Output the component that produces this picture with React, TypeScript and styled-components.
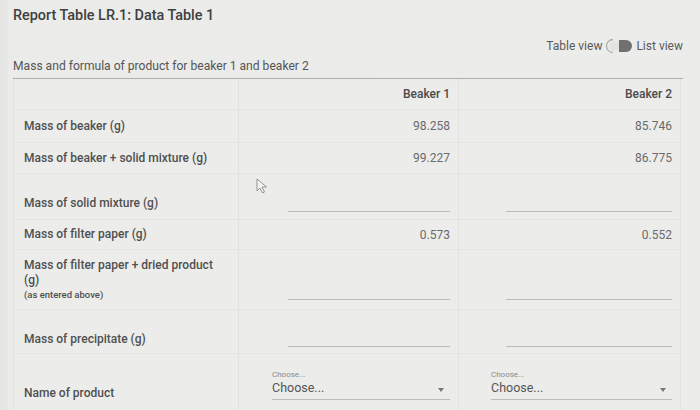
import React from "react";
import styled, { createGlobalStyle } from "styled-components";

const Global = createGlobalStyle`
  html, body { margin: 0; padding: 0; background: #eaeae8; }
  body { font-family: Roboto, "Liberation Sans", Arial, sans-serif; width: 700px; height: 410px; overflow: hidden; }
`;

const Page = styled.div`
  position: relative;
  width: 700px;
  height: 410px;
  box-sizing: border-box;
  padding: 6px 17px 0 13px;
  background: linear-gradient(90deg, #e6e6e4 0px, #e6e6e4 7px, #ebebe9 8px, #ececea 100%);
  overflow: hidden;
`;

const Title = styled.h1`
  margin: 0;
  font-size: 14.4px;
  font-weight: 500;
  color: #3f3f3f;
  line-height: 20px;
`;

const ToggleRow = styled.div`
  display: flex;
  justify-content: flex-end;
  align-items: center;
  gap: 2px;
  margin-top: 12px;
  font-size: 12px;
  color: #5a5a5a;
  height: 16px;
`;

const Switch = styled.span`
  display: inline-flex;
  width: 30px;
  height: 16px;
`;

const Subtitle = styled.div`
  font-size: 12.1px;
  color: #555;
  line-height: 16px;
  margin-top: 4px;
  padding-bottom: 4px;
  border-bottom: 1.5px solid #adadab;
`;

const Grid = styled.div`
  display: grid;
  grid-template-columns: 225px 220px 222px;
  border-left: 1px solid #e2e2e0;
`;

const Cell = styled.div<{ $h: number; $align?: "start" | "center" | "end"; $right?: boolean; $pb?: number; $pt?: number }>`
  height: ${(p) => p.$h}px;
  box-sizing: border-box;
  display: flex;
  flex-direction: column;
  justify-content: ${(p) => (p.$align === "start" ? "flex-start" : p.$align === "end" ? "flex-end" : "center")};
  align-items: ${(p) => (p.$right ? "flex-end" : "stretch")};
  padding: ${(p) => p.$pt ?? 0}px 8px ${(p) => p.$pb ?? 0}px 10px;
  border-right: 1px solid #e2e2e0;
  border-bottom: 1px solid #e3e3e1;
  background: #ececea;
`;

const Label = styled.div`
  font-size: 12px;
  font-weight: 500;
  color: #505050;
  line-height: 15px;
`;

const Note = styled.div`
  font-size: 9.5px;
  font-weight: 500;
  color: #505050;
  line-height: 13px;
`;

const Head = styled.div`
  font-size: 12px;
  font-weight: 500;
  color: #4a4a4a;
`;

const Value = styled.div`
  font-size: 12px;
  color: #6a6a6a;
`;

const Underline = styled.div<{ $left: number }>`
  margin-left: ${(p) => p.$left}px;
  border-bottom: 1px solid #bcbcba;
  height: 0;
`;

const Select = styled.div<{ $left: number }>`
  margin-left: ${(p) => p.$left - 10}px;
  border-bottom: 1px solid #bcbcba;
  position: relative;
  padding-bottom: 4px;
`;

const SelectHint = styled.div`
  font-size: 8px;
  color: #8a8a8a;
  line-height: 10px;
`;

const SelectValue = styled.div`
  font-size: 12.5px;
  color: #555;
  line-height: 15px;
`;

const Caret = styled.span`
  position: absolute;
  right: 6px;
  bottom: 7px;
  width: 0;
  height: 0;
  border-left: 3px solid transparent;
  border-right: 3px solid transparent;
  border-top: 4px solid #777;
`;

const Pointer = styled.svg`
  position: absolute;
  left: 256px;
  top: 178px;
`;

const rows = [
  { label: "Mass of beaker (g)", b1: "98.258", b2: "85.746", h: 33 },
  { label: "Mass of beaker + solid mixture (g)", b1: "99.227", b2: "86.775", h: 31 },
];

export default function App() {
  return (
    <Page>
      <Global />
      <Title>Report Table LR.1: Data Table 1</Title>
      <ToggleRow>
        <span>Table view</span>
        <Switch>
          <svg width="30" height="16" viewBox="0 0 30 16">
            <path d="M9 1.5 A6.5 6.5 0 0 0 9 14.5" fill="none" stroke="#b0b0ae" strokeWidth="1.3" />
            <rect x="5" y="3.5" width="22" height="9" rx="4.5" fill="#e4e4e2" />
            <circle cx="22" cy="8" r="6" fill="#707070" />
            <rect x="15" y="2" width="7" height="12" fill="#707070" />
          </svg>
        </Switch>
        <span>List view</span>
      </ToggleRow>
      <Subtitle>Mass and formula of product for beaker 1 and beaker 2</Subtitle>
      <Grid>
        <Cell $h={31} />
        <Cell $h={31} $right>
          <Head>Beaker 1</Head>
        </Cell>
        <Cell $h={31} $right>
          <Head>Beaker 2</Head>
        </Cell>

        {rows.map((r) => (
          <React.Fragment key={r.label}>
            <Cell $h={r.h}>
              <Label>{r.label}</Label>
            </Cell>
            <Cell $h={r.h} $right>
              <Value>{r.b1}</Value>
            </Cell>
            <Cell $h={r.h} $right>
              <Value>{r.b2}</Value>
            </Cell>
          </React.Fragment>
        ))}

        <Cell $h={46} $align="end" $pb={8}>
          <Label>Mass of solid mixture (g)</Label>
        </Cell>
        <Cell $h={46} $align="end" $pb={7}>
          <Underline $left={39} />
        </Cell>
        <Cell $h={46} $align="end" $pb={7}>
          <Underline $left={37} />
        </Cell>

        <Cell $h={30}>
          <Label>Mass of filter paper (g)</Label>
        </Cell>
        <Cell $h={30} $right>
          <Value>0.573</Value>
        </Cell>
        <Cell $h={30} $right>
          <Value>0.552</Value>
        </Cell>

        <Cell $h={60} $align="start" $pt={8}>
          <Label>Mass of filter paper + dried product</Label>
          <Label>(g)</Label>
          <Note>(as entered above)</Note>
        </Cell>
        <Cell $h={60} $align="end" $pb={9}>
          <Underline $left={39} />
        </Cell>
        <Cell $h={60} $align="end" $pb={9}>
          <Underline $left={37} />
        </Cell>

        <Cell $h={44} $align="end" $pb={6}>
          <Label>Mass of precipitate (g)</Label>
        </Cell>
        <Cell $h={44} $align="end" $pb={6}>
          <Underline $left={39} />
        </Cell>
        <Cell $h={44} $align="end" $pb={6}>
          <Underline $left={37} />
        </Cell>

        <Cell $h={58} $align="end" $pb={10}>
          <Label>Name of product</Label>
        </Cell>
        <Cell $h={58} $align="end" $pb={11}>
          <Select $left={33}>
            <SelectHint>Choose...</SelectHint>
            <SelectValue>Choose...</SelectValue>
            <Caret />
          </Select>
        </Cell>
        <Cell $h={58} $align="end" $pb={11}>
          <Select $left={32}>
            <SelectHint>Choose...</SelectHint>
            <SelectValue>Choose...</SelectValue>
            <Caret />
          </Select>
        </Cell>
      </Grid>
      <Pointer width="12" height="16" viewBox="0 0 12 16">
        <path d="M1 1 L1 13 L4 10 L6.5 15 L8.5 14 L6 9 L10.5 9 Z" fill="#f4f4f2" stroke="#8a8a8a" strokeWidth="0.9" strokeLinejoin="round" />
      </Pointer>
    </Page>
  );
}
